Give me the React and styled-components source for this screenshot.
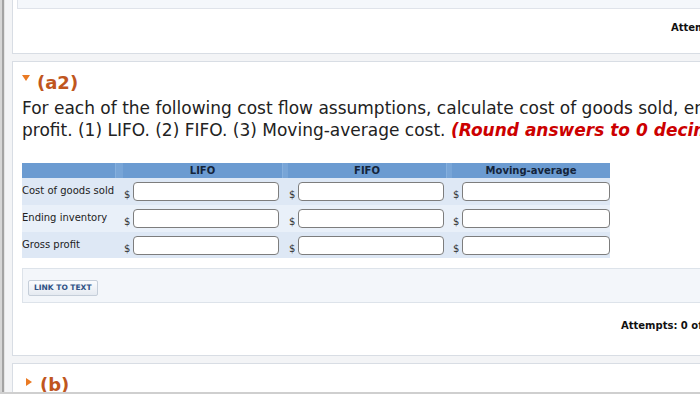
import React from "react";
import styled, { createGlobalStyle } from "styled-components";

const GlobalStyle = createGlobalStyle`
  html, body {
    margin: 0;
    padding: 0;
    background: #f3f4f6;
    overflow: hidden;
  }
  body {
    font-family: "DejaVu Sans", Verdana, sans-serif;
    color: #222;
  }
`;

const COLS = "93px 8px 159px 6px 158px 6px 158px";

const Page = styled.div`
  width: 700px;
  height: 394px;
  display: flex;
  flex-direction: column;
  overflow: hidden;
`;

const Main = styled.div`
  flex: 1;
  min-height: 0;
  display: flex;
  overflow: hidden;
`;

const Rail = styled.div`
  width: 5px;
  flex-shrink: 0;
  background: linear-gradient(
    to right,
    #d6d6d6 0 2px,
    #a3a3a3 2px 4px,
    #e4e4e4 4px 5px
  );
`;

const Column = styled.div`
  width: 820px;
  flex-shrink: 0;
  padding-left: 7px;
  display: flex;
  flex-direction: column;
  gap: 7px;
`;

const Panel = styled.section`
  box-sizing: border-box;
  background: #fff;
  border: 1px solid #d8dde4;
  border-right: none;
  border-top-width: ${({ $noTop }) => ($noTop ? 0 : 1)}px;
  height: ${({ $h }) => ($h ? `${$h}px` : "auto")};
  flex-shrink: 0;
  padding: ${({ $pad }) => $pad || "0"};
`;

const TopStrip = styled.div`
  margin-left: 4px;
  height: 9px;
  box-sizing: border-box;
  background: #f4f7fb;
  border-left: 1px solid #dfe3ea;
  border-bottom: 1px solid #dfe3ea;
`;

const AttemptsRow = styled.div`
  margin-top: ${({ $top }) => $top}px;
  padding-left: ${({ $indent }) => $indent}px;
  font-size: 10px;
  line-height: 12px;
  font-weight: bold;
  color: #111;
  white-space: nowrap;
`;

const Heading = styled.h3`
  margin: 0;
  height: 22px;
  display: flex;
  align-items: center;
  gap: ${({ $gap }) => $gap}px;
  padding-left: ${({ $indent }) => $indent || 0}px;
  font-size: 18px;
  font-weight: bold;
  color: #c0561e;
`;

const TriDown = styled.span`
  width: 0;
  height: 0;
  border-left: 4.5px solid transparent;
  border-right: 4.5px solid transparent;
  border-top: 6px solid #ea7a23;
  margin-top: -8px;
`;

const TriRight = styled.span`
  width: 0;
  height: 0;
  border-top: 4.5px solid transparent;
  border-bottom: 4.5px solid transparent;
  border-left: 6px solid #ea7a23;
  margin-top: -4px;
`;

const Prompt = styled.p`
  margin: 4px 0 0;
  font-size: 17px;
  line-height: 22px;
  color: #222;
  white-space: nowrap;
`;

const Hint = styled.span`
  color: #cc0000;
  font-weight: bold;
  font-style: italic;
`;

const Table = styled.div`
  margin-top: 22px;
  width: 588px;
`;

const HeadRow = styled.div`
  display: grid;
  grid-template-columns: ${COLS};
  height: 15px;
  background: #6b9bd1;
`;

const HeadCell = styled.div`
  font-size: 10px;
  font-weight: bold;
  line-height: 15px;
  text-align: center;
  color: #14243a;
  background: ${({ $gap }) => ($gap ? "#78a5d7" : "transparent")};
  border-left: ${({ $gap }) => ($gap ? "1px solid #86b0de" : "none")};
`;

const Row = styled.div`
  display: grid;
  grid-template-columns: ${COLS};
  height: ${({ $h }) => $h}px;
  background: ${({ $alt }) => ($alt ? "#e9f0f9" : "#dee8f5")};
`;

const Label = styled.div`
  font-size: 10px;
  color: #222;
  display: flex;
  align-items: center;
  padding-bottom: 3px;
  white-space: nowrap;
`;

const Cell = styled.div`
  display: flex;
  align-items: flex-end;
  gap: 3px;
  padding: 4px 0 4px 1px;
`;

const Dollar = styled.span`
  font-size: 10px;
  line-height: 10px;
  color: #333;
  padding-bottom: 1px;
`;

const Field = styled.input`
  box-sizing: border-box;
  width: ${({ $w }) => $w}px;
  height: 19px;
  border: 1px solid #7d7d7d;
  border-radius: 4px;
  background: #fff;
  margin: 0;
  padding: 0 4px;
  outline: none;
`;

const LinkBox = styled.div`
  margin-top: 10px;
  height: 35px;
  box-sizing: border-box;
  background: #f3f6fa;
  border: 1px solid #dde3ea;
  border-right: none;
  padding: 6px 0 0 5px;
`;

const LinkButton = styled.button`
  height: 16px;
  padding: 0 5px;
  font-family: "DejaVu Sans", Verdana, sans-serif;
  font-size: 7.5px;
  font-weight: bold;
  color: #2f5285;
  border: 1px solid #c5ced9;
  border-radius: 2px;
  background: linear-gradient(#fbfcfe, #e5eaf1);
  cursor: pointer;
`;

const BottomBar = styled.div`
  height: 2px;
  background: #cfcfcf;
`;

const rows = [
  { label: "Cost of goods sold", h: 27 },
  { label: "Ending inventory", h: 27, alt: true },
  { label: "Gross profit", h: 26 },
];

const methods = [
  { name: "LIFO", w: 146 },
  { name: "FIFO", w: 146 },
  { name: "Moving-average", w: 148 },
];

export default function App() {
  return (
    <Page>
      <GlobalStyle />
      <Main>
        <Rail />
        <Column>
          <Panel $h={54} $noTop>
            <TopStrip />
            <AttemptsRow $top={13} $indent={658}>
              Attempts: 0 of 3 used
            </AttemptsRow>
          </Panel>

          <Panel $h={295} $pad="9px 0 0 9px">
            <Heading $gap={7}>
              <TriDown />
              (a2)
            </Heading>
            <Prompt>
              For each of the following cost flow assumptions, calculate cost
              of goods sold, ending inventory, and gross
              <br />
              profit. (1) LIFO. (2) FIFO. (3) Moving-average cost.{" "}
              <Hint>(Round answers to 0 decimal places, e.g. 5,275.)</Hint>
            </Prompt>

            <Table>
              <HeadRow>
                <HeadCell />
                <HeadCell $gap />
                <HeadCell>LIFO</HeadCell>
                <HeadCell $gap />
                <HeadCell>FIFO</HeadCell>
                <HeadCell $gap />
                <HeadCell>Moving-average</HeadCell>
              </HeadRow>
              {rows.map((r) => (
                <Row key={r.label} $h={r.h} $alt={r.alt}>
                  <Label>{r.label}</Label>
                  {methods.map((m) => (
                    <React.Fragment key={m.name}>
                      <div />
                      <Cell>
                        <Dollar>$</Dollar>
                        <Field $w={m.w} />
                      </Cell>
                    </React.Fragment>
                  ))}
                </Row>
              ))}
            </Table>

            <LinkBox>
              <LinkButton>LINK TO TEXT</LinkButton>
            </LinkBox>

            <AttemptsRow $top={17} $indent={599}>
              Attempts: 0 of 3 used
            </AttemptsRow>
          </Panel>

          <Panel $h={60} $pad="9px 0 0 0">
            <Heading $gap={8} $indent={13}>
              <TriRight />
              (b)
            </Heading>
          </Panel>
        </Column>
      </Main>
      <BottomBar />
    </Page>
  );
}
